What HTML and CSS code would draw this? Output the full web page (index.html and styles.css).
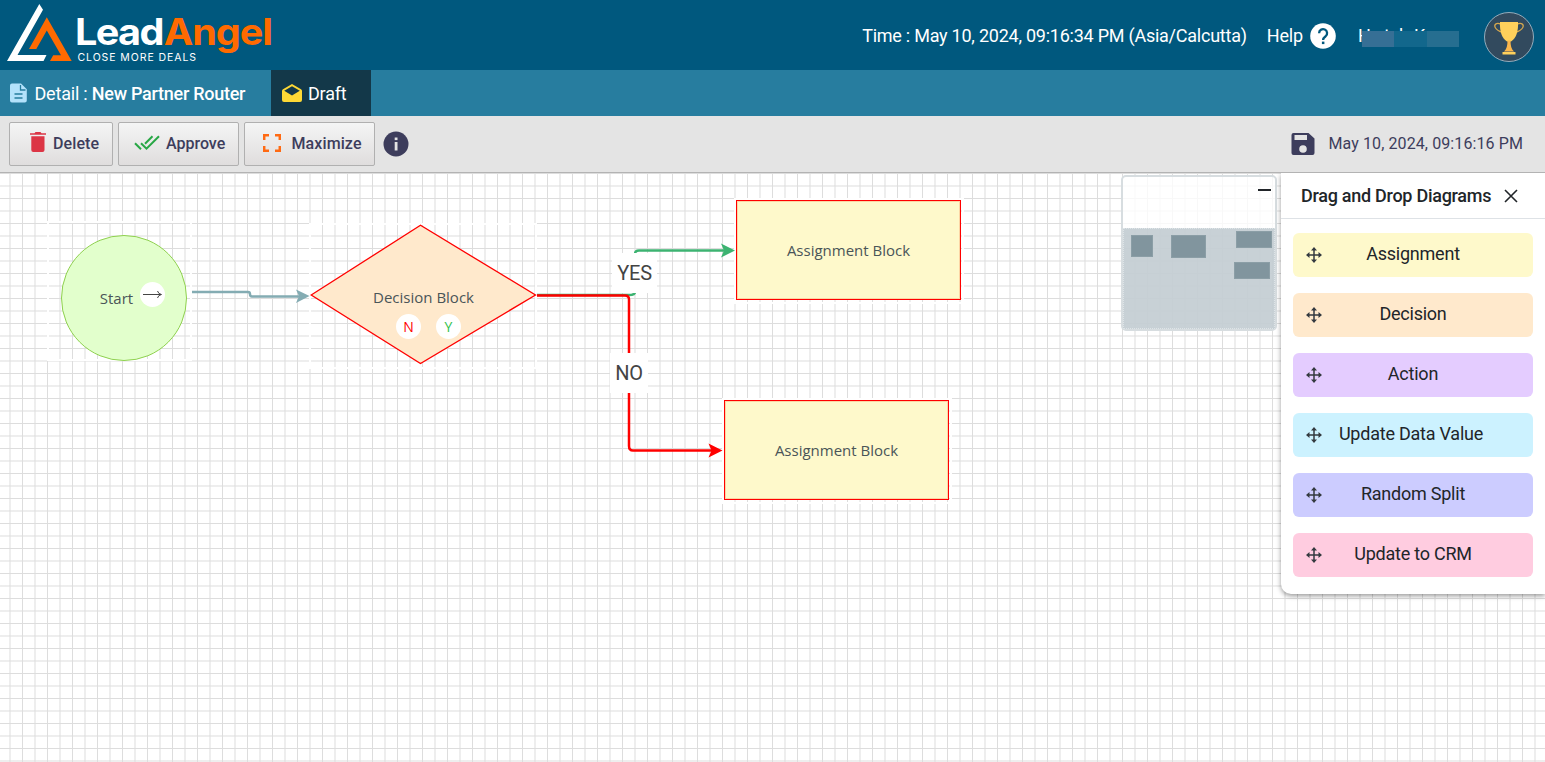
FILE: index.html
```html
<!DOCTYPE html>
<html lang="en">
<head>
  <meta charset="UTF-8" />
  <title>LeadAngel - New Partner Router</title>
  <link rel="stylesheet" href="styles.css">
</head>
<body>

<!-- Header -->
<header class="header">
  <svg class="logo" width="280" height="70" viewBox="0 0 280 70">
    <polygon fill="#fff" points="39.3,4 43,9.7 17.5,55 46.5,55 43.5,61 7,61" />
    <polygon fill="#ff6a00" points="46.8,17.3 71.7,61 50,61 53.2,55.2 61,55.2 46.8,30.5 36.3,49 29,49" />
    <g transform="translate(75 45) scale(1.07 1)">
      <text class="logo-name" x="0" y="0" fill="#fff" textLength="83.500">Lead</text>
      <text class="logo-name" x="83" y="0" fill="#ff6a00" textLength="102">Angel</text>
    </g>
    <text class="logo-tag" x="77.5" y="61" fill="#fff" textLength="118.500">CLOSE MORE DEALS</text>
  </svg>
  <div class="header-right">
    <span class="time">Time : May 10, 2024, 09:16:34 PM (Asia/Calcutta)</span>
    <span class="help">Help</span>
    <svg class="help-icon" width="26" height="26" viewBox="0 0 26 26">
      <circle cx="13" cy="13" r="12.8" fill="#fff" />
      <path d="M9.1 10.2a4 4 0 1 1 6.6 3c-1.5 1.2-2.6 1.9-2.6 3.8" fill="none" stroke="#00587e" stroke-width="2.3" />
      <rect x="11.9" y="18.6" width="2.5" height="2.5" fill="#00587e" />
    </svg>
    <div class="user">
      <span>H</span><span>t</span><span>h</span><span>K</span>
      <div class="user-mask"><i></i><i></i><i></i></div>
    </div>
    <svg class="avatar" width="50" height="50" viewBox="0 0 50 50">
      <circle cx="25" cy="25" r="24.5" fill="#324a5e" stroke="#b4c4cf" stroke-width="0.8" />
      <path d="M17 12.500c-3-2-6.500-1-6.200 1.800.3 3 3.200 4.200 6.200 5.700M33 12.500c3-2 6.500-1 6.200 1.800-.3 3-3.200 4.200-6.200 5.700" fill="none" stroke="#d9a94e" stroke-width="1.300" />
      <path d="M16 10h18c.4 9-1.500 16-7 19.500h-4c-5.500-3.500-7.400-10.500-7-19.500z" fill="#ffd05b" />
      <path d="M23.500 28.500h3c0 5 .8 8.500 3.500 11h-10c2.700-2.500 3.500-6 3.500-11z" fill="#f9b54c" />
      <rect x="18.500" y="40" width="13" height="2.500" fill="#ffd05b" />
    </svg>
  </div>
</header>

<!-- Tabs -->
<nav class="tabs">
  <div class="tab">
    <svg class="doc-icon" width="17" height="20" viewBox="0 0 17 20">
      <path d="M2 .5h9l5.800 5.800V17.500a2 2 0 0 1-2 2H2a2 2 0 0 1-2-2v-15a2 2 0 0 1 2-2z" fill="#b3e2fb" />
      <path d="M10.500 2v5h5" fill="none" stroke="#277d9f" stroke-width="1.300" />
      <path d="M4.500 11h8M4.500 15h8" stroke="#277d9f" stroke-width="1.600" />
    </svg>
    <span>Detail : <b>New Partner Router</b></span>
  </div>
  <div class="tab tab-active">
    <svg width="20" height="20" viewBox="0 0 20 20">
      <path d="M10 1l9 5.200c.6.400 1 1 1 1.800v9a2 2 0 0 1-2 2H2a2 2 0 0 1-2-2V8c0-.8.4-1.400 1-1.800z" fill="#fdd835" />
      <path d="M10 3.200l7.800 4.600L10 12.500 2.200 7.800z" fill="#133849" />
    </svg>
    <span>Draft</span>
  </div>
</nav>

<!-- Toolbar -->
<div class="toolbar">
  <button class="btn btn-delete">
    <svg width="16" height="20" viewBox="0 0 16 20">
      <path d="M0 1.200h4.500l1-1.200h5l1 1.200H16v1.600H0zM1.300 4.200h13.200V18a2 2 0 0 1-2 2H3.300a2 2 0 0 1-2-2z" fill="#dc3545" />
    </svg>
    Delete
  </button>
  <button class="btn btn-approve">
    <svg width="26" height="16" viewBox="0 0 26 16">
      <path d="M1 8.200l6 6M7 8.200l5.500 5.500L25 1.200M11 8.700L18.500 1.200" fill="none" stroke="#28a745" stroke-width="2" />
    </svg>
    Approve
  </button>
  <button class="btn btn-max">
    <svg width="18" height="18" viewBox="0 0 18 18">
      <path d="M1.200 6V1.200H6M12 1.200h4.800V6M16.800 12v4.800H12M6 16.800H1.200V12" fill="none" stroke="#ff6a13" stroke-width="2.500" />
    </svg>
    Maximize
  </button>
  <svg class="info" width="26" height="26" viewBox="0 0 26 26">
    <circle cx="13" cy="13" r="12.500" fill="#3d3d5c" />
    <rect x="11.700" y="6.500" width="2.800" height="2.600" fill="#e4e4e4" />
    <rect x="11.700" y="11" width="2.800" height="8.500" fill="#e4e4e4" />
  </svg>
  <div class="saved">
    <svg width="24" height="24" viewBox="0 0 24 24">
      <path d="M2 1h15.500L23.500 6.500V21a2 2 0 0 1-2 2H2.500a2 2 0 0 1-2-2V3a2 2 0 0 1 2-2z" fill="#3d3d5c" />
      <rect x="3.500" y="3" width="12.500" height="5" fill="#e4e4e4" />
      <circle cx="12" cy="17" r="3.800" fill="#e4e4e4" />
    </svg>
    <span>May 10, 2024, 09:16:16 PM</span>
  </div>
</div>

<!-- Diagram -->
<main class="canvas">
  <div class="frame frame-start"></div>
  <div class="frame frame-decision"></div>
  <div class="frame frame-yes"></div>
  <div class="frame frame-no"></div>

  <svg class="links" width="1000" height="400" viewBox="0 0 1000 400">
    <path d="M192 119h56q2 0 2 2.200t2 2.200H300" fill="none" stroke="#84acb3" stroke-width="2.500" />
    <path d="M296 116.500l13.500 6.500-13.500 7 3-6.700z" fill="#84acb3" />
    <path d="M537 122h92q6 0 6-3V81q0-3.500 4-3.500H726" fill="none" stroke="#3cb371" stroke-width="2.500" />
    <path d="M721 70.500l14 7-14 7 3-7z" fill="#3cb371" />
    <path d="M537 122.500h88q4 0 4 4V273q0 4.500 4 4.500H714" fill="none" stroke="#ff0000" stroke-width="2.500" />
    <path d="M708.500 270.500l14 7-14 7 3-7z" fill="#ff0000" />
    <polygon points="311.200,122 420.500,52.300 535.500,122 420.500,190.500" fill="#ffe9cc" stroke="#ff0000" stroke-width="1.300" />
  </svg>

  <div class="node start">
    <span>Start</span>
    <svg class="port" width="25" height="25" viewBox="0 0 25 25">
      <circle cx="12.500" cy="12.500" r="12.500" fill="#fff" />
      <path d="M3 12.500h18M17.500 9q.8 3 4 3.500-3.200.5-4 3.500" fill="none" stroke="#444" stroke-width="1" />
    </svg>
  </div>
  <div class="node decision">
    <span>Decision Block</span>
    <div class="ports"><b class="port-n">N</b><b class="port-y">Y</b></div>
  </div>
  <div class="node assign assign-yes">Assignment Block</div>
  <div class="node assign assign-no">Assignment Block</div>
  <div class="label label-yes">YES</div>
  <div class="label label-no">NO</div>

  <div class="minimap">
    <div class="minimap-view"></div>
    <div class="minimap-toggle"></div>
    <div class="mini mini-start"></div>
    <div class="mini mini-decision"></div>
    <div class="mini mini-yes"></div>
    <div class="mini mini-no"></div>
  </div>

  <aside class="panel">
    <div class="panel-head">
      <span>Drag and Drop Diagrams</span>
      <svg width="14" height="14" viewBox="0 0 14 14"><path d="M1 1l12 12M13 1L1 13" stroke="#212529" stroke-width="1.600" /></svg>
    </div>
    <div class="panel-list">
      <div class="item assignment"><svg class="move"><use href="#move" /></svg>Assignment</div>
      <div class="item decide"><svg class="move"><use href="#move" /></svg>Decision</div>
      <div class="item action"><svg class="move"><use href="#move" /></svg>Action</div>
      <div class="item update"><svg class="move"><use href="#move" /></svg><span class="wide">Update Data Value</span></div>
      <div class="item random"><svg class="move"><use href="#move" /></svg>Random Split</div>
      <div class="item crm"><svg class="move"><use href="#move" /></svg>Update to CRM</div>
    </div>
  </aside>
</main>

<svg class="defs" width="0" height="0">
  <symbol id="move" viewBox="0 0 16 16">
    <path d="M8 2v12M2 8h12" stroke="#343a40" stroke-width="1.500" />
    <path d="M8 0l3 3.500H5zM8 16l3-3.500H5zM0 8l3.500-3v6zM16 8l-3.500-3v6z" fill="#343a40" />
  </symbol>
</svg>

</body>
</html>
```

FILE: styles.css
```css
* {
  box-sizing: border-box;
}
body {
  margin: 0;
  height: 762px;
  overflow: hidden;
  display: flex;
  flex-direction: column;
  font-family: Roboto, "Liberation Sans", sans-serif;
  color: #212529;
}

/* header */
.header {
  height: 70px;
  flex: none;
  background: #00587e;
  color: #fff;
  display: flex;
  justify-content: space-between;
}
.logo-name {
  font: 700 37px Inter, sans-serif;
}
.logo-tag {
  font: 400 10.5px Inter, sans-serif;
}
.header-right {
  display: flex;
  align-items: center;
  padding: 3px 11px 0 0;
  font-size: 18px;
}
.time,
.help {
  margin-top: -2px;
}
.time {
  letter-spacing: -0.24px;
}
.help {
  margin-left: 20px;
  letter-spacing: -0.15px;
}
.help-icon {
  margin: -2px 0 0 7px;
}
.user {
  position: relative;
  width: 101px;
  margin: -2px 25px 0 22px;
  display: flex;
}
.user span:nth-child(1) { width: 26px; }
.user span:nth-child(2) { width: 15px; }
.user span:nth-child(3) { width: 15px; }
.user-mask {
  position: absolute;
  left: 4px;
  top: 6px;
  display: flex;
}
.user-mask i {
  width: 32px;
  height: 16px;
  background: #366f95;
}
.user-mask i:nth-child(2) {
  width: 33px;
  background: #12678c;
}
.user-mask i:nth-child(3) {
  background: #266e90;
}

/* tabs */
.tabs {
  height: 46px;
  flex: none;
  background: #277d9f;
  color: #fff;
  display: flex;
  font-size: 18px;
  letter-spacing: -0.2px;
}
.tab {
  width: 271px;
  display: flex;
  align-items: center;
  gap: 7.5px;
  padding-left: 10px;
}
.tab b {
  font-weight: 500;
  letter-spacing: -0.27px;
}
.tab-active {
  width: 100px;
  gap: 6px;
  padding-left: 11px;
  background: #133849;
}

/* toolbar */
.toolbar {
  height: 57px;
  flex: none;
  display: flex;
  align-items: center;
  padding: 0 22px 0 9px;
  background: #e4e4e4;
  border-bottom: 1px solid #b3b3b3;
  color: #3d3d5c;
}
.btn {
  height: 44px;
  margin-right: 5px;
  padding: 0 0 2px;
  display: flex;
  align-items: center;
  border: 1px solid #b0b0b0;
  border-radius: 2px;
  background: linear-gradient(#f4f5f5, #dfdddd);
  color: #3d3d5c;
  font: 500 16px Roboto, sans-serif;
  letter-spacing: 0.1px;
}
.btn-delete {
  width: 104px;
  gap: 7px;
  padding-left: 20px;
}
.btn-delete svg {
  margin-top: -2px;
}
.btn-approve {
  width: 121px;
  gap: 6px;
  padding-left: 15px;
  letter-spacing: 0;
}
.btn-max {
  width: 131px;
  gap: 10.5px;
  padding-left: 18px;
}
.info {
  margin-left: 2.5px;
}
.saved {
  margin-left: auto;
  display: flex;
  align-items: center;
  gap: 13px;
  font-size: 16px;
  letter-spacing: 0.1px;
}
.saved span {
  margin-top: -2px;
}

/* diagram */
.canvas {
  position: relative;
  flex: 1;
  background-color: #fff;
  background-image:
    linear-gradient(#ddd 1px, transparent 1px),
    linear-gradient(90deg, #ddd 1px, transparent 1px),
    linear-gradient(transparent 12px, rgba(221, 221, 221, 0.5) 12px, rgba(221, 221, 221, 0.5) 14px, transparent 14px),
    linear-gradient(90deg, transparent 12px, rgba(221, 221, 221, 0.5) 12px, rgba(221, 221, 221, 0.5) 14px, transparent 14px);
  background-size: 25px 25px;
  background-position: 22px 0;
}
.frame,
.node,
.label {
  position: absolute;
}
.frame {
  border: 2px solid #fff;
}
.frame-start { left: 47px; top: 48px; width: 145px; height: 140px; }
.frame-decision { left: 309px; top: 50px; width: 228px; height: 146px; }
.frame-yes { left: 734px; top: 25px; width: 230px; height: 106px; }
.frame-no { left: 722px; top: 225px; width: 230px; height: 106px; }

.links {
  position: absolute;
  left: 0;
  top: 0;
}
.node {
  display: flex;
  align-items: center;
  justify-content: center;
  font: 15px "Open Sans", sans-serif;
  color: #4a5558;
}
.start {
  left: 61px;
  top: 62px;
  width: 126px;
  height: 126px;
  border: 1.5px solid #8fd14f;
  border-radius: 50%;
  background: #e2ffcc;
  gap: 7px;
  padding-left: 17px;
}
.port {
  margin-top: -7px;
}
.decision {
  left: 311px;
  top: 114px;
  width: 225px;
  flex-direction: column;
  gap: 8px;
}
.ports {
  display: flex;
  gap: 15px;
  padding-left: 10px;
  margin-top: -1px;
}
.ports b {
  width: 25px;
  height: 25px;
  line-height: 25px;
  border-radius: 50%;
  background: #fff;
  text-align: center;
  font-weight: 400;
  font-size: 14px;
}
.port-n { color: #ff0000; }
.port-y { color: #32c24d; }
.assign {
  width: 225px;
  height: 100px;
  border: 1px solid #ff0000;
  background: #fef9cb;
  box-shadow: inset 0 0 0 1px #fcd5a4;
}
.assign-yes { left: 736px; top: 27px; }
.assign-no { left: 724px; top: 227px; }
.label {
  height: 40px;
  line-height: 40px;
  background: #fff;
  text-align: center;
  font-size: 20px;
  letter-spacing: -0.2px;
  color: #444;
}
.label-yes { left: 612px; top: 80px; width: 45px; }
.label-no { left: 610px; top: 180px; width: 38px; }

/* minimap */
.minimap {
  position: absolute;
  left: 1121px;
  top: 2px;
  width: 156px;
  height: 156px;
  border: 2px solid #d7dde0;
  border-radius: 5px;
  background: rgba(255, 255, 255, 0.8);
}
.minimap div {
  position: absolute;
}
.minimap-view {
  left: 0;
  top: 51px;
  width: 152px;
  height: 101px;
  background: rgba(176, 190, 197, 0.7);
  border: 1px dotted #dfe5e8;
}
.minimap-toggle {
  left: 135px;
  top: 12px;
  width: 13px;
  height: 2px;
  background: #212529;
}
.minimap .mini {
  background: #81959e;
  border: 1px solid #8b9ea6;
}
.mini-start { left: 8px; top: 58px; width: 22px; height: 22px; }
.mini-decision { left: 48px; top: 58px; width: 35px; height: 23px; }
.mini-yes { left: 113px; top: 54px; width: 36px; height: 17px; }
.mini-no { left: 111px; top: 85px; width: 36px; height: 17px; }

/* drag and drop panel */
.panel {
  position: absolute;
  right: 0;
  top: 0;
  width: 264px;
  height: 421px;
  background: #fff;
  border-radius: 0 0 0 10px;
  box-shadow: 0 2px 5px rgba(0, 0, 0, 0.4);
  clip-path: inset(0 0 -12px -12px);
}
.panel-head {
  height: 46px;
  padding: 0 27px 0 20px;
  display: flex;
  align-items: center;
  justify-content: space-between;
  border-bottom: 1px solid #dee2e6;
  font-size: 18px;
  font-weight: 500;
  letter-spacing: -0.27px;
}
.panel-list {
  display: flex;
  flex-direction: column;
  gap: 16px;
  padding: 14px 12px;
}
.item {
  position: relative;
  height: 44px;
  line-height: 42px;
  border-radius: 6px;
  text-align: center;
  font-size: 18px;
  letter-spacing: -0.23px;
}
.move {
  position: absolute;
  left: 13px;
  top: 14px;
  width: 16px;
  height: 16px;
}
.wide {
  margin-right: 4px;
}
.assignment { background: #fef9cb; }
.decide { background: #ffe9cc; }
.action { background: #e4ccff; }
.update { background: #ccf2ff; }
.random { background: #ccccff; }
.crm { background: #ffcce0; }
.defs {
  position: absolute;
}
```
